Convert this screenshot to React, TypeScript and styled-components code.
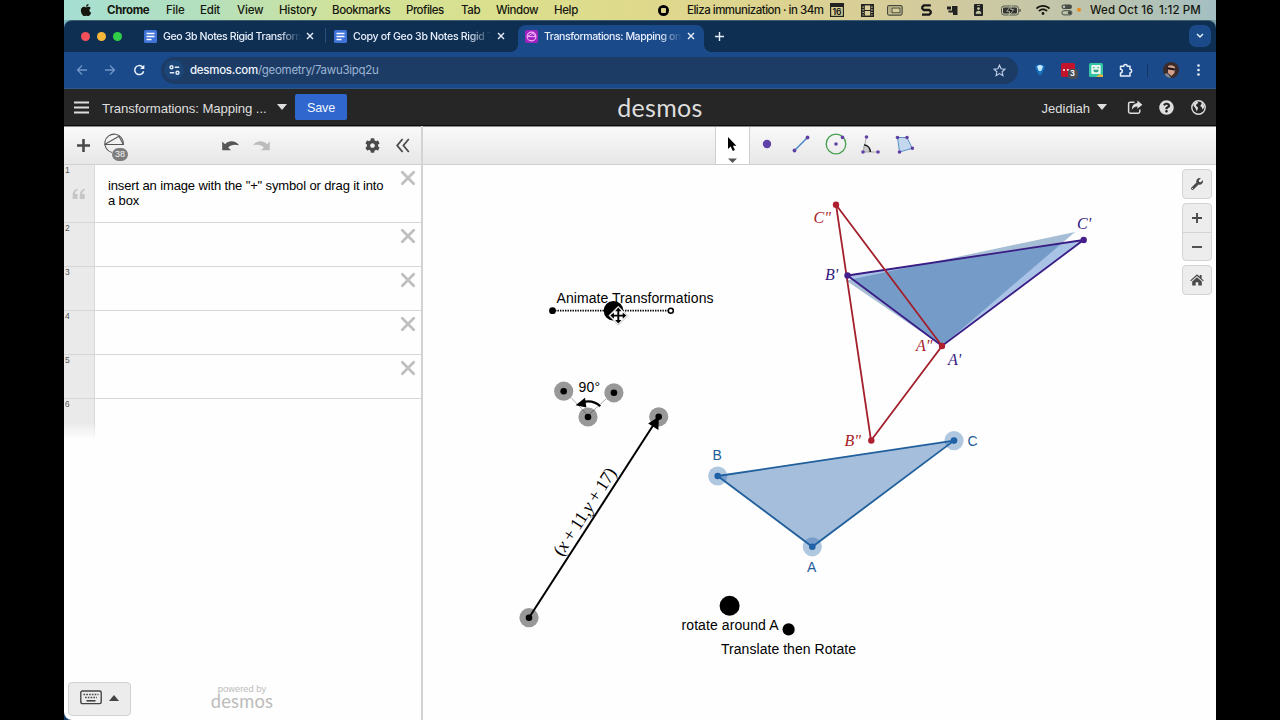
import React from "react";
import styled, { createGlobalStyle } from "styled-components";
import { FaApple, FaWrench, FaQuestionCircle, FaCog, FaWifi } from "react-icons/fa";

const ui = `Inter, "Liberation Sans", sans-serif`;
const arial = `"Liberation Sans", Arial, sans-serif`;

const GlobalStyle = createGlobalStyle`
  * { box-sizing: border-box; }
  body { margin: 0; background: #000; overflow: hidden; }
  svg { display: block; flex: none; }
`;

const Screen = styled.div`
  width: 1152px;
  height: 720px;
  margin: 0 auto;
  display: flex;
  flex-direction: column;
  overflow: hidden;
  background: #123a63;
  font-family: ${arial};
`;

/* ---------- macOS menu bar ---------- */
const MenuBar = styled.div`
  height: 20px;
  flex: none;
  display: flex;
  align-items: center;
  padding-left: 15px;
  font-family: ${ui};
  font-size: 11.5px;
  color: #15170f;
  background: linear-gradient(90deg, #a5dfd3 0%, #b4e0bd 12%, #d0e29a 24%, #dbe08d 38%, #dfd98c 50%, #ddd390 62%, #d3ca9e 76%, #bcc4ae 90%, #a4bfc2 100%);
`;
const MenuItem = styled.span<{ $w: number; $bold?: boolean; $ls?: number }>`
  width: ${(p) => p.$w}px;
  flex: none;
  white-space: pre;
  font-weight: ${(p) => (p.$bold ? 700 : 500)};
  letter-spacing: ${(p) => p.$ls ?? -0.35}px;
`;
const MenuIcon = styled.span<{ $w: number }>`
  width: ${(p) => p.$w}px;
  flex: none;
  display: flex;
`;

/* ---------- browser chrome ---------- */
const TabBackdrop = styled.div`
  flex: none;
  background: linear-gradient(90deg, #7fb9c4, #b8b883 50%, #7da3ad);
`;
const TabStrip = styled.div`
  height: 32px;
  display: flex;
  align-items: flex-end;
  padding-left: 21px;
  padding-right: 5px;
  background: #0f2f52;
  border-radius: 8px 8px 0 0;
  border-top: 1px solid #3d5d6c;
`;
const Lights = styled.div`
  display: flex;
  gap: 7px;
  height: 31px;
  align-items: center;
  width: 52px;
  margin-left: -4px;
  margin-right: 4px;
`;
const Light = styled.i<{ $c: string }>`
  width: 9px;
  height: 9px;
  border-radius: 50%;
  background: ${(p) => p.$c};
`;
const Tab = styled.div<{ $w: number; $active?: boolean; $inset?: number; $ml?: number }>`
  position: relative;
  width: ${(p) => p.$w}px;
  height: 27px;
  flex: none;
  display: flex;
  align-items: center;
  margin-left: ${(p) => p.$ml ?? 0}px;
  padding: 0 ${(p) => p.$inset ?? 8}px 5px 7px;
  border-radius: 8px 8px 0 0;
  background: ${(p) => (p.$active ? "#1b4a8b" : "transparent")};
  &::before, &::after {
    content: "";
    display: ${(p) => (p.$active ? "block" : "none")};
    position: absolute;
    bottom: 0;
    width: 7px;
    height: 7px;
  }
  &::before { left: -7px; background: radial-gradient(circle at 0 0, transparent 6.6px, #1b4a8b 7px); }
  &::after { right: -7px; background: radial-gradient(circle at 100% 0, transparent 6.6px, #1b4a8b 7px); }
`;
const TabTitle = styled.span<{ $ls: number }>`
  width: 138px;
  margin-left: 6px;
  white-space: nowrap;
  font-family: ${ui};
  font-size: 10.6px;
  font-weight: 500;
  letter-spacing: ${(p) => p.$ls}px;
  color: #e6eefb;
  mask-image: linear-gradient(90deg, #000 84%, transparent 100%);
`;
const TabClose = styled.span`
  margin-left: auto;
`;
const TabDivider = styled.i`
  width: 1px;
  height: 15px;
  margin: 0 0 9px 3px;
  background: #26507f;
`;
const NewTab = styled.div`
  margin-left: 11px;
  height: 27px;
  padding-top: 6.5px;
`;
const TabSearch = styled.div`
  width: 22px;
  height: 22px;
  margin: 0 0 5px auto;
  border-radius: 7px;
  background: #1b4a8b;
  display: flex;
  align-items: center;
  justify-content: center;
`;
const AddressRow = styled.div`
  height: 37px;
  flex: none;
  display: flex;
  align-items: center;
  padding: 0 12px 0 11px;
  background: #1b4a8b;
  border-bottom: 1px solid #2f5684;
`;
const NavIcons = styled.div`
  width: 86px;
  display: flex;
  gap: 14px;
`;
const Omnibox = styled.div`
  width: 857px;
  height: 27px;
  flex: none;
  border-radius: 14px;
  background: #1c3c66;
  display: flex;
  align-items: center;
  padding: 0 12px 0 3px;
`;
const SiteInfo = styled.div`
  width: 20px;
  height: 20px;
  border-radius: 50%;
  background: #1b4677;
  display: flex;
  align-items: center;
  justify-content: center;
`;
const Url = styled.span`
  margin-left: 6px;
  flex: 1;
  font-family: ${ui};
  font-size: 11.5px;
  letter-spacing: -0.28px;
  color: #9db5d3;
  b { font-weight: 500; color: #f0f5fd; }
`;
const Extensions = styled.div`
  flex: 1;
  display: flex;
  align-items: center;
  justify-content: space-between;
  padding-left: 16px;
`;
const BadgeIcon = styled.span`
  position: relative;
  display: block;
  width: 14px;
  height: 14px;
  background: #c4142c;
  border-radius: 2px;
`;
const Dots = styled.i`
  position: absolute;
  left: 2px;
  top: 6px;
  width: 10px;
  height: 2px;
  background: repeating-linear-gradient(90deg, #f6c6cc 0 2px, transparent 2px 4px);
`;
const Badge = styled.b`
  position: absolute;
  left: 7px;
  top: 6px;
  width: 10px;
  height: 10px;
  border-radius: 3px;
  background: #4a4e55;
  color: #fff;
  font: 700 7.5px/10px ${ui};
  text-align: center;
`;
const Rule = styled.i`
  width: 1px;
  height: 13px;
  background: #123563;
`;

/* ---------- application header ---------- */
const Header = styled.header`
  height: 37px;
  flex: none;
  display: flex;
  align-items: center;
  padding: 0 10px;
  background: #262626;
  border-bottom: 1px solid #0b0b0b;
  color: #dedede;
  font-size: 13px;
`;
const HeaderSide = styled.div<{ $right?: boolean }>`
  flex: 1;
  display: flex;
  align-items: center;
  justify-content: ${(p) => (p.$right ? "flex-end" : "flex-start")};
`;
const DocTitle = styled.span`
  width: 175px;
  margin: 2px 0 0 13px;
  white-space: nowrap;
  letter-spacing: -0.1px;
  font-size: 13.2px;
`;
const UserName = styled.span`
  margin-top: 2px;
`;
const Caret = styled.i<{ $up?: boolean; $c?: string }>`
  display: block;
  border: 5px solid transparent;
  ${(p) => (p.$up ? "border-bottom" : "border-top")}: 6px solid ${(p) => p.$c ?? "#dedede"};
  ${(p) => (p.$up ? "border-top" : "border-bottom")}: 0;
`;
const SaveButton = styled.button`
  margin-left: 8px;
  width: 52px;
  height: 26px;
  padding: 1px 0 0;
  border: 0;
  border-radius: 2px;
  background: #2f67ce;
  color: #f2f6ff;
  font: 12.6px ${arial};
  letter-spacing: -0.2px;
`;
const Wordmark = styled.div<{ $size: number; $color: string; $ls: number; $ml?: number }>`
  margin-left: ${(p) => p.$ml ?? 0}px;
  font-family: Lato, ${arial};
  font-size: ${(p) => p.$size}px;
  line-height: 0.88;
  letter-spacing: ${(p) => p.$ls}px;
  color: ${(p) => p.$color};
`;
const HeaderIcon = styled.span<{ $ml: number }>`
  margin-left: ${(p) => p.$ml}px;
`;

/* ---------- workspace ---------- */
const Workspace = styled.div`
  flex: 1;
  min-height: 0;
  display: flex;
`;
const Sidebar = styled.aside`
  width: 359px;
  flex: none;
  display: flex;
  flex-direction: column;
  background: #fefefe;
  border-right: 2px solid #d3d3d3;
  border-bottom-left-radius: 8px;
`;
const bar = `
  height: 39px;
  flex: none;
  display: flex;
  align-items: center;
  background: linear-gradient(#f9f9f9, #e7e7e7);
  border-top: 1px solid #8d8d8d;
  border-bottom: 1px solid #cfcfcf;
`;
const ListBar = styled.div`
  ${bar}
  padding: 0 11px 0 12px;
  color: #4a4a4a;
`;
const GeometryButton = styled.div`
  position: relative;
  margin-left: 12px;
  width: 28px;
  height: 30px;
`;
const Count = styled.span`
  position: absolute;
  left: 9px;
  top: 17px;
  width: 16px;
  height: 13px;
  border-radius: 7px;
  background: #7d7d7d;
  color: #f4f4f4;
  font: 9px/13px ${arial};
  text-align: center;
`;
const BarIcon = styled.span<{ $ml: number }>`
  margin-left: ${(p) => p.$ml}px;
`;
const Row = styled.div<{ $h: number; $last?: boolean }>`
  height: ${(p) => p.$h}px;
  flex: none;
  display: flex;
  border-bottom: ${(p) => (p.$last ? "0" : "1px solid #d6d6d6")};
`;
const Gutter = styled.div<{ $fade?: boolean }>`
  width: 31px;
  display: flex;
  flex-direction: column;
  align-items: center;
  background: #eaeaea;
  border-right: 1px solid #d9d9d9;
  ${(p) => p.$fade && "mask-image: linear-gradient(#000 60%, transparent 100%);"}
`;
const RowNumber = styled.span`
  align-self: flex-start;
  height: 23px;
  padding-left: 1px;
  font-size: 8.5px;
  line-height: 11px;
  color: #555;
`;
const RowBody = styled.div`
  flex: 1;
  display: flex;
  justify-content: space-between;
  padding: 5px 5px 0 13px;
`;
const Note = styled.p`
  width: 285px;
  margin: 8px 0 0;
  font-size: 13px;
  letter-spacing: -0.13px;
  line-height: 15px;
  color: #000;
`;
const ListFooter = styled.div`
  margin-top: auto;
  display: flex;
  align-items: center;
  padding: 0 0 4px 4px;
`;
const KeyboardButton = styled.div`
  width: 63px;
  height: 34px;
  display: flex;
  align-items: center;
  justify-content: center;
  gap: 7px;
  padding-bottom: 3px;
  background: #ececec;
  border: 1px solid #d2d2d2;
  border-radius: 4px;
`;
const Powered = styled.div`
  width: 68px;
  margin: 0 0 4px 77px;
  display: flex;
  flex-direction: column;
  align-items: center;
  font-size: 9.4px;
  line-height: 8px;
  color: #bcbcbc;
`;
const Board = styled.main`
  position: relative;
  flex: 1;
  display: flex;
  flex-direction: column;
  background: #fefefe;
`;
const ToolBar = styled.div`
  ${bar}
  padding-left: 292px;
`;
const Tool = styled.div<{ $active?: boolean }>`
  width: ${(p) => (p.$active ? 35 : 34.3)}px;
  height: 37px;
  padding-bottom: ${(p) => (p.$active ? 0 : 3)}px;
  display: flex;
  align-items: center;
  justify-content: center;
  background: ${(p) => (p.$active ? "#fff" : "none")};
  border: ${(p) => (p.$active ? "solid #cfcfcf" : "none")};
  border-width: 0 1px;
`;
const SideTools = styled.div`
  position: absolute;
  right: 4px;
  top: 43px;
  width: 30px;
  display: flex;
  flex-direction: column;
  gap: 4px;
`;
const ToolGroup = styled.div`
  background: #ededed;
  border: 1px solid #d4d4d4;
  border-radius: 4px;
  color: #4a4a4a;
`;
const ToolButton = styled.div`
  height: 28px;
  display: flex;
  align-items: center;
  justify-content: center;
  & + & { border-top: 1px solid #d4d4d4; }
`;

const DocIcon = () => (
  <svg width="13" height="13" viewBox="0 0 13 13">
    <rect width="13" height="13" rx="1.5" fill="#3f73d8" />
    <path d="M2.5 3.5h8M2.5 6.5h8M2.5 9.5h5" stroke="#fff" strokeWidth="1.3" />
  </svg>
);
const SmallX = () => (
  <svg width="8" height="8" viewBox="0 0 8 8">
    <path d="M1 1l6 6M7 1l-6 6" stroke="#e9f0fb" strokeWidth="1.4" />
  </svg>
);
const RowX = () => (
  <svg width="16" height="16" viewBox="0 0 16 16">
    <path d="M2.3 2.3l11.4 11.4M13.7 2.3L2.3 13.7" stroke="#bfbfbf" strokeWidth="2.7" strokeLinecap="round" />
  </svg>
);
const Undo = ({ flip, color }: { flip?: boolean; color: string }) => (
  <svg width="17" height="12" viewBox="0 0 17 12">
    <path transform={flip ? "translate(17 0) scale(-1 1)" : undefined} fill={color}
      d="M0.2 1.4V10.3H9L6.2 7.4C8.4 4.8 12.5 4 17 5.2C14 1 7.3 -0.4 3.1 4.3Z" />
  </svg>
);

const rows = [
  { n: 1, h: 58, note: 'insert an image with the "+" symbol or drag it into a box' },
  { n: 2, h: 44 },
  { n: 3, h: 44 },
  { n: 4, h: 44 },
  { n: 5, h: 44 },
];

const Halo = ({ x, y }: { x: number; y: number }) => (
  <>
    <circle cx={x} cy={y} r="9.6" fill="#000" opacity="0.4" />
    <circle cx={x} cy={y} r="3.3" />
  </>
);

const Geometry = () => (
  <svg width="793" height="555" viewBox="423 165 793 555" fontFamily={arial} fontSize="14">
    <g fill="#2866ab">
      <path d="M847.5 275.5L1083.5 240L942 346Z" fill="#5488d0" fillOpacity="0.5" />
      <path d="M846 280.5L1075 232L942 346Z" fill="#30689f" fillOpacity="0.43" />
      <path d="M717.7 476L954 440.6L812.3 546.8Z" fillOpacity="0.42" stroke="#205f9c" strokeWidth="1.8" />
      <path d="M847.5 275.5L1083.5 240L942 346Z" fill="none" stroke="#3a1c85" strokeWidth="1.8" />
      {[[717.7, 476], [954, 440.6], [812.3, 546.8]].map(([x, y]) => (
        <g key={x}>
          <circle cx={x} cy={y} r="9.6" opacity="0.36" />
          <circle cx={x} cy={y} r="3.3" fill="#1f62a8" />
        </g>
      ))}
    </g>
    <path d="M836 204.7L942 346L871 440.5Z" fill="none" stroke="#a3202c" strokeWidth="1.8" />
    <g fill="#45208c">
      <circle cx="847.5" cy="275.5" r="3.2" />
      <circle cx="1083.7" cy="240" r="3.2" />
    </g>
    <g fill="#b01f2e">
      <circle cx="836" cy="204.7" r="3.2" />
      <circle cx="942" cy="346" r="3.2" />
      <circle cx="871.3" cy="440.5" r="3.2" />
    </g>
    <g fontFamily='"Liberation Serif", serif' fontStyle="italic" fontSize="16">
      <g fill="#341a80">
        <text x="1077" y="229">C'</text>
        <text x="825" y="280">B'</text>
        <text x="948" y="364.5">A'</text>
      </g>
      <g fill="#a81c29">
        <text x="813.5" y="223">C"</text>
        <text x="844.5" y="445.5">B"</text>
        <text x="916" y="351">A"</text>
      </g>
    </g>
    <g fill="#1d5c96">
      <text x="712.5" y="460">B</text>
      <text x="967.5" y="445.5">C</text>
      <text x="807" y="571.5">A</text>
    </g>

    <path d="M552.5 310.7H668" stroke="#000" strokeWidth="1.7" strokeDasharray="1.4 1.1" />
    <circle cx="552.5" cy="310.7" r="3.4" />
    <circle cx="670.8" cy="310.8" r="2.5" fill="#fff" stroke="#000" strokeWidth="1.5" />
    <circle cx="613.5" cy="310.8" r="9.8" />
    <text x="556.5" y="303" textLength="157">Animate Transformations</text>
    <g transform="translate(618.3 315.6)">
      <path d="M0 -9.6L9.6 0L0 9.6L-9.6 0Z" fill="#fff" stroke="#999" strokeWidth="0.6" />
      <path d="M0 -5.5V5.5M-5.5 0H5.5" stroke="#000" strokeWidth="1.9" />
      <path d="M0 -8L3.2 -4.4H-3.2ZM0 8L3.2 4.4H-3.2ZM-8 0L-4.4 3.2V-3.2ZM8 0L4.4 3.2V-3.2Z" />
    </g>

    <path d="M571 397.5L588 415.5L606 399" fill="none" stroke="#999" strokeWidth="0.8" />
    <Halo x={563.7} y={391.2} />
    <Halo x={613.9} y={392.8} />
    <Halo x={588} y={417} />
    <path d="M600.3 406.2Q592 399 582 402.6" fill="none" stroke="#000" strokeWidth="2.1" />
    <path d="M575.6 405.2L585 397.8L586.4 407.6Z" />
    <text x="578.5" y="392" textLength="21.5">90°</text>

    <Halo x={529} y={617.7} />
    <Halo x={658.7} y={416.8} />
    <path d="M529 617.7L654 424" stroke="#000" strokeWidth="2" />
    <path d="M658.9 416.5L658.4 430L648.2 423.6Z" />
    <g transform="translate(589.6 514.8) rotate(-57.1)">
      <text textAnchor="middle" fontFamily='"Liberation Serif", serif' fontSize="18" textLength="101">
        (<tspan fontStyle="italic">x</tspan> + 11,<tspan fontStyle="italic">y</tspan> + 17)
      </text>
    </g>

    <circle cx="729.6" cy="605.8" r="10" />
    <circle cx="788.6" cy="629.4" r="6.1" />
    <text x="681.5" y="630" textLength="97">rotate around A</text>
    <text x="721" y="654" textLength="135">Translate then Rotate</text>
  </svg>
);

export default function App() {
  return (
    <Screen>
      <GlobalStyle />
      <MenuBar>
        <MenuIcon $w={28}><FaApple size={14} /></MenuIcon>
        <MenuItem $w={59} $bold>Chrome</MenuItem>
        <MenuItem $w={34} $ls={-0.2}>File</MenuItem>
        <MenuItem $w={37} $ls={-0.2}>Edit</MenuItem>
        <MenuItem $w={42} $ls={-0.2}>View</MenuItem>
        <MenuItem $w={53} $ls={-0.25}>History</MenuItem>
        <MenuItem $w={74} $ls={-0.4}>Bookmarks</MenuItem>
        <MenuItem $w={55} $ls={-0.5}>Profiles</MenuItem>
        <MenuItem $w={35}>Tab</MenuItem>
        <MenuItem $w={58} $ls={-0.45}>Window</MenuItem>
        <MenuItem $w={104} $ls={-0.35}>Help</MenuItem>
        <MenuIcon $w={29}>
          <svg width="11" height="11" viewBox="0 0 11 11"><circle cx="5.5" cy="5.5" r="5.5" /><rect x="3" y="3" width="5" height="5" rx="1" fill="#ded68e" /></svg>
        </MenuIcon>
        <MenuItem $w={143} $ls={-0.5}>Eliza immunization · in 34m</MenuItem>
        <MenuIcon $w={31}>
          <svg width="14" height="14" viewBox="0 0 14 14"><rect x="0.6" y="0.6" width="12.8" height="12.8" fill="none" stroke="#222" strokeWidth="1.2" /><rect width="14" height="4" fill="#222" /><text x="7" y="11.9" fontSize="8.5" fontWeight="700" textAnchor="middle" fill="#222">16</text></svg>
        </MenuIcon>
        <MenuIcon $w={26}>
          <svg width="13" height="13" viewBox="0 0 13 13" fill="none" stroke="#222"><rect x="0.7" y="0.7" width="11.6" height="11.6" strokeWidth="1.4" /><path d="M3.3 1v11M9.7 1v11M3.3 6.5h6.4" /><path d="M2 1v11M11 1v11" strokeWidth="2" strokeDasharray="1.5 1.2" /></svg>
        </MenuIcon>
        <MenuIcon $w={34}>
          <svg width="16" height="11" viewBox="0 0 16 11" fill="none" stroke="#45473d"><rect x="0.6" y="0.6" width="14.5" height="9.5" rx="1.5" strokeWidth="1.2" /><rect x="5" y="3" width="8" height="4.8" /><path d="M3 2.5v6" strokeDasharray="1 1" /></svg>
        </MenuIcon>
        <MenuIcon $w={26}>
          <svg width="11" height="12" viewBox="0 0 11 12"><path d="M9.8 1.4H2.8L1.3 3v1.6L2.8 6h5.4l1.5 1.4V9l-1.5 1.6H1" fill="none" stroke="#181818" strokeWidth="2.3" /></svg>
        </MenuIcon>
        <MenuIcon $w={27}>
          <svg width="11" height="11" viewBox="0 0 11 11" fill="#222"><path d="M0 1.5H4V4.5H0ZM5 1H10.5V10H6V7.5H1.5V5.5H5Z" /></svg>
        </MenuIcon>
        <MenuIcon $w={27}>
          <svg width="9" height="12" viewBox="0 0 9 12"><rect width="9" height="12" rx="1" fill="#222" /><circle cx="4.5" cy="4.6" r="1.4" fill="#c8c9a8" /><path d="M2 9.6a2.5 2.5 0 0 1 5 0ZM3 1.5h3" fill="#c8c9a8" stroke="#c8c9a8" strokeWidth="0.7" /></svg>
        </MenuIcon>
        <MenuIcon $w={35}>
          <svg width="21" height="11" viewBox="0 0 21 11"><rect x="0.5" y="1" width="17" height="9" rx="2.4" fill="none" stroke="#555b50" /><rect x="2" y="2.5" width="14" height="6" rx="1" fill="#333" /><path d="M19 4v3" stroke="#555b50" strokeWidth="1.4" /><path d="M10.5 0.5L5.8 6.2h3L7.8 10.6l4.8-6h-3Z" fill="#111" stroke="#bfc5ac" strokeWidth="0.9" /></svg>
        </MenuIcon>
        <MenuIcon $w={25}><FaWifi size={14} /></MenuIcon>
        <MenuIcon $w={29}>
          <svg width="20" height="12" viewBox="0 0 20 12"><rect x="0.5" y="0.5" width="10.5" height="4.4" rx="2.2" fill="#444b47" /><circle cx="3" cy="2.7" r="1.3" fill="#b8c4b4" /><rect x="0.9" y="6.7" width="10" height="4.2" rx="2.1" fill="none" stroke="#444b47" /><circle cx="8.6" cy="8.8" r="1.8" fill="#444b47" /><circle cx="18" cy="5.8" r="2" fill="#e88b1f" /></svg>
        </MenuIcon>
        <MenuItem $w={69} $ls={0.12}>Wed Oct 16</MenuItem>
        <MenuItem $w={45} $ls={0.12}>1:12 PM</MenuItem>
      </MenuBar>

      <TabBackdrop>
        <TabStrip>
          <Lights><Light $c="#f2505a" /><Light $c="#f6b73a" /><Light $c="#2fce46" /></Lights>
          <Tab $w={185}><DocIcon /><TabTitle $ls={-0.4}>Geo 3b Notes Rigid Transform</TabTitle><TabClose><SmallX /></TabClose></Tab>
          <TabDivider />
          <Tab $w={191} $ml={1} $inset={13}><DocIcon /><TabTitle $ls={-0.33}>Copy of Geo 3b Notes Rigid T</TabTitle><TabClose><SmallX /></TabClose></Tab>
          <Tab $w={186} $inset={9} $active>
            <svg width="13" height="13" viewBox="0 0 13 13"><rect width="13" height="13" rx="2" fill="#a022c0" /><circle cx="6.5" cy="6.5" r="4.4" fill="none" stroke="#f3b5fa" strokeWidth="1.1" /><path d="M2.3 6.6h8.4M3 6L8 3.2L10.5 6.4" fill="none" stroke="#f3b5fa" /></svg>
            <TabTitle $ls={-0.45}>Transformations: Mapping on</TabTitle><TabClose><SmallX /></TabClose>
          </Tab>
          <NewTab><svg width="9" height="9" viewBox="0 0 9 9"><path d="M4.5 0v9M0 4.5h9" stroke="#e6eefb" strokeWidth="1.4" /></svg></NewTab>
          <TabSearch><svg width="8" height="6" viewBox="0 0 8 6"><path d="M1 1l3 3l3-3" fill="none" stroke="#e6eefb" strokeWidth="1.5" /></svg></TabSearch>
        </TabStrip>
      </TabBackdrop>
      <AddressRow>
        <NavIcons>
          <svg width="14" height="14" viewBox="0 0 14 14"><path d="M12 7H2.5M7 2.5L2.5 7L7 11.5" fill="none" stroke="#7095c6" strokeWidth="1.3" /></svg>
          <svg width="14" height="14" viewBox="0 0 14 14"><path d="M2 7h9.5M7 2.5L11.5 7L7 11.5" fill="none" stroke="#7095c6" strokeWidth="1.3" /></svg>
          <svg width="16" height="14" viewBox="0 0 16 14"><path d="M12.6 8.2A4.5 4.5 0 1 1 11.3 3.8L12.8 5.2" fill="none" stroke="#eef4fd" strokeWidth="1.5" /><path d="M13.3 1.8V6H9.1Z" fill="#eef4fd" /></svg>
        </NavIcons>
        <Omnibox>
          <SiteInfo><svg width="11" height="10" viewBox="0 0 11 10" fill="none" stroke="#e4edfa" strokeWidth="1.4"><circle cx="2.5" cy="2.3" r="1.5" /><path d="M5.8 2.3h4.4M0.8 7.7h4.4" /><circle cx="8.5" cy="7.7" r="1.5" /></svg></SiteInfo>
          <Url><b>desmos.com</b>/geometry/7awu3ipq2u</Url>
          <svg width="13" height="13" viewBox="0 0 13 13"><path d="M6.5 1.2L8.1 4.8L12 5.2L9.1 7.8L9.9 11.6L6.5 9.6L3.1 11.6L3.9 7.8L1 5.2L4.9 4.8Z" fill="none" stroke="#c3d4ec" strokeWidth="1.1" /></svg>
        </Omnibox>
        <Extensions>
          <svg width="12" height="14" viewBox="0 0 12 14"><path d="M1.4 3.6Q2.6 1.4 6 1.4T10.6 3.6Q10.8 6.4 6 13Q1.2 6.4 1.4 3.6Z" fill="#1777c4" /><path d="M3 3.4Q6 0.8 9 3.4L7.4 7.4Q6 8.4 4.6 7.4Z" fill="#c6e8fb" /></svg>
          <BadgeIcon><Dots /><Badge>3</Badge></BadgeIcon>
          <svg width="14" height="14" viewBox="0 0 14 14"><rect width="14" height="14" rx="1.5" fill="#34c4a1" /><rect x="2.3" y="2" width="9.4" height="9" rx="1" fill="#e4f8ef" /><path d="M4.4 6.7a2.6 2.6 0 0 0 5.2 0Z" fill="#2d9e80" /><path d="M5 4v1.3M9 4v1.3" stroke="#2d9e80" strokeWidth="1.2" /><path d="M7 14l4-3l3 1v2Z" fill="#e7b63c" /></svg>
          <svg width="15" height="15" viewBox="0 0 15 15"><path d="M2.5 3.2H5.8A1.7 1.7 0 0 1 9.2 3.2H12V6.3A1.7 1.7 0 0 1 12 9.7V13H2.5V9.9A1.8 1.8 0 0 0 2.5 6.3Z" fill="none" stroke="#e6eefb" strokeWidth="1.5" strokeLinejoin="round" /></svg>
          <Rule />
          <svg width="16" height="16" viewBox="0 0 16 16"><circle cx="8" cy="8" r="8" fill="#3b2b2b" /><path d="M5 4Q9 2 12 5L11.5 11L8.5 14L5 11Z" fill="#d2a08c" /><path d="M4.5 6.3L11.8 7.5" stroke="#161216" strokeWidth="2" /><path d="M1.5 12.5Q4 10 6 13L8 16A8 8 0 0 1 1.5 12.5Z" fill="#7d8796" /></svg>
          <svg width="11" height="14" viewBox="0 0 11 14" fill="#e6eefb"><circle cx="5.5" cy="2.5" r="1.3" /><circle cx="5.5" cy="7" r="1.3" /><circle cx="5.5" cy="11.5" r="1.3" /></svg>
        </Extensions>
      </AddressRow>

      <Header>
        <HeaderSide>
          <svg width="15" height="13" viewBox="0 0 15 13"><path d="M0 1.5h15M0 6.5h15M0 11.5h15" stroke="#dedede" strokeWidth="2" /></svg>
          <DocTitle>Transformations: Mapping ...</DocTitle>
          <Caret />
          <SaveButton>Save</SaveButton>
        </HeaderSide>
        <Wordmark $size={25} $color="#dedede" $ls={0.3} $ml={40}>desmos</Wordmark>
        <HeaderSide $right>
          <UserName>Jedidiah</UserName>
          <HeaderIcon $ml={7}><Caret /></HeaderIcon>
          <HeaderIcon $ml={20}>
            <svg width="16" height="15" viewBox="0 0 16 15"><path d="M7.5 2.2H3.2Q1.6 2.2 1.6 3.8V11.6Q1.6 13.2 3.2 13.2H11.2Q12.8 13.2 12.8 11.6V9.4" fill="none" stroke="#dedede" strokeWidth="1.5" /><path d="M10.4 0.6L15.4 4.7L10.4 8.8V6.4Q6.6 6.3 4.8 10Q4.6 3.6 10.4 3Z" fill="#dedede" /></svg>
          </HeaderIcon>
          <HeaderIcon $ml={16}><FaQuestionCircle size={15} /></HeaderIcon>
          <HeaderIcon $ml={17}>
            <svg width="15" height="15" viewBox="0 0 15 15"><circle cx="7.5" cy="7.5" r="6.7" fill="none" stroke="#dedede" strokeWidth="1.4" /><path d="M3 3.2L5.4 1.8L7.2 2.2L6.4 3.8L5 4.8L5.2 6L7 7.6L6.6 9.4L5.8 11.4L4.8 9L3.8 7.2L2.2 5.6ZM9.8 2L12 3.4L13.4 6.4L12.4 8.8L11.4 9.4L11 7.4L9.4 6.2L9.8 4.8L10.8 4Z" fill="#dedede" /></svg>
          </HeaderIcon>
        </HeaderSide>
      </Header>

      <Workspace>
        <Sidebar>
          <ListBar>
            <svg width="15" height="15" viewBox="0 0 15 15"><path d="M7.5 1v13M1 7.5h13" stroke="#4a4a4a" strokeWidth="2.6" /></svg>
            <GeometryButton>
              <svg width="24" height="24" viewBox="0 0 24 24" fill="none" stroke="#555" strokeWidth="1.1"><path d="M9 21.5A9.3 9.3 0 1 1 20.3 13.5" /><path d="M1.5 13.5H20.3L16 5.2L1.5 13.5" /></svg>
              <Count>38</Count>
            </GeometryButton>
            <BarIcon $ml={91}><Undo color="#555" /></BarIcon>
            <BarIcon $ml={14}><Undo flip color="#bcbcbc" /></BarIcon>
            <BarIcon $ml={95}><FaCog size={15} /></BarIcon>
            <BarIcon $ml={16}><svg width="14" height="15" viewBox="0 0 14 15"><path d="M6.6 1L1.2 7.5L6.6 14M12.8 1L7.4 7.5L12.8 14" fill="none" stroke="#4a4a4a" strokeWidth="1.8" /></svg></BarIcon>
          </ListBar>
          {rows.map((r) => (
            <Row key={r.n} $h={r.h}>
              <Gutter>
                <RowNumber>{r.n}</RowNumber>
                {r.note && <svg width="14" height="12" viewBox="0 0 14 12" fill="#c6c6c6"><path d="M5.6 0.6V2.2Q3 3.4 2.9 6H5.6V11H0.6V6.6Q0.8 2 5.6 0.6ZM12.8 0.6V2.2Q10.2 3.4 10.1 6H12.8V11H7.8V6.6Q8 2 12.8 0.6Z" /></svg>}
              </Gutter>
              <RowBody><Note>{r.note}</Note><RowX /></RowBody>
            </Row>
          ))}
          <Row $h={40} $last><Gutter $fade><RowNumber>6</RowNumber></Gutter></Row>
          <ListFooter>
            <KeyboardButton>
              <svg width="22" height="15" viewBox="0 0 22 15"><rect x="0.8" y="1" width="20.4" height="12.6" rx="1.5" fill="none" stroke="#444" strokeWidth="1.4" /><path d="M3.5 4.5h15M5 7.5h12" stroke="#444" strokeWidth="1.6" strokeDasharray="1.6 1.2" /><path d="M6.5 10.8h9" stroke="#444" strokeWidth="1.6" /></svg>
              <Caret $up $c="#444" />
            </KeyboardButton>
            <Powered>powered by<Wordmark $size={18.3} $color="#bcbcbc" $ls={0.2}>desmos</Wordmark></Powered>
          </ListFooter>
        </Sidebar>

        <Board>
          <ToolBar>
            <Tool $active>
              <svg width="14" height="34" viewBox="0 0 14 34"><path d="M2 8V20L4.7 17.5L6.8 21.9L8.9 20.9L6.9 16.7H10.4Z" fill="#000" /><path d="M2 29.5h9L6.5 34Z" fill="#555" /></svg>
            </Tool>
            <Tool><svg width="10" height="10" viewBox="0 0 10 10"><circle cx="5" cy="5" r="4.2" fill="#6042a6" /></svg></Tool>
            <Tool><svg width="18" height="18" viewBox="0 0 18 18"><path d="M2.5 15.5L15.5 2.5" stroke="#4583c4" strokeWidth="1.5" /><circle cx="2.5" cy="15.5" r="1.9" fill="#6042a6" /><circle cx="15.5" cy="2.5" r="1.9" fill="#6042a6" /></svg></Tool>
            <Tool><svg width="22" height="22" viewBox="0 0 22 22"><circle cx="11" cy="11" r="9.8" fill="none" stroke="#47a04f" strokeWidth="1.3" /><circle cx="11" cy="11" r="1.8" fill="#6042a6" /><circle cx="17.5" cy="4.4" r="1.8" fill="#6042a6" /></svg></Tool>
            <Tool><svg width="19" height="19" viewBox="0 0 19 19"><path d="M2 17V10.5A6.5 6.5 0 0 1 9 17Z" fill="#c8c8c8" /><path d="M5.5 2L2 17H17" fill="none" stroke="#aaa" /><path d="M3.2 9.8A7.5 7.5 0 0 1 9.4 17" fill="none" stroke="#111" strokeWidth="1.6" /><g fill="#6042a6"><circle cx="5.5" cy="2" r="1.8" /><circle cx="2" cy="17" r="1.8" /><circle cx="17" cy="17" r="1.8" /></g></svg></Tool>
            <Tool><svg width="19" height="19" viewBox="0 0 19 19"><path d="M2.5 2.5H12L17.3 13.3L4.5 17Z" fill="#c3d8ee" stroke="#5a8fc8" /><g fill="#6042a6"><circle cx="2.5" cy="2.5" r="1.8" /><circle cx="12" cy="2.5" r="1.8" /><circle cx="17.3" cy="13.3" r="1.8" /><circle cx="4.5" cy="17" r="1.8" /></g></svg></Tool>
          </ToolBar>
          <Geometry />
          <SideTools>
            <ToolGroup><ToolButton><FaWrench size={12} /></ToolButton></ToolGroup>
            <ToolGroup>
              <ToolButton><svg width="10" height="10" viewBox="0 0 10 10"><path d="M5 0v10M0 5h10" stroke="#4a4a4a" strokeWidth="1.9" /></svg></ToolButton>
              <ToolButton><svg width="10" height="10" viewBox="0 0 10 10"><path d="M0 5h10" stroke="#4a4a4a" strokeWidth="1.9" /></svg></ToolButton>
            </ToolGroup>
            <ToolGroup><ToolButton><svg width="14" height="12" viewBox="0 0 14 12" fill="#4a4a4a"><path d="M7 0.3L9.8 2.8V1H11.6V4.4L13.8 6.4L13 7.3L7 2L1 7.3L0.2 6.4Z" /><path d="M7 3.2L11.8 7.4V11.6H8.3V8.2H5.7V11.6H2.2V7.4Z" /></svg></ToolButton></ToolGroup>
          </SideTools>
        </Board>
      </Workspace>
    </Screen>
  );
}
